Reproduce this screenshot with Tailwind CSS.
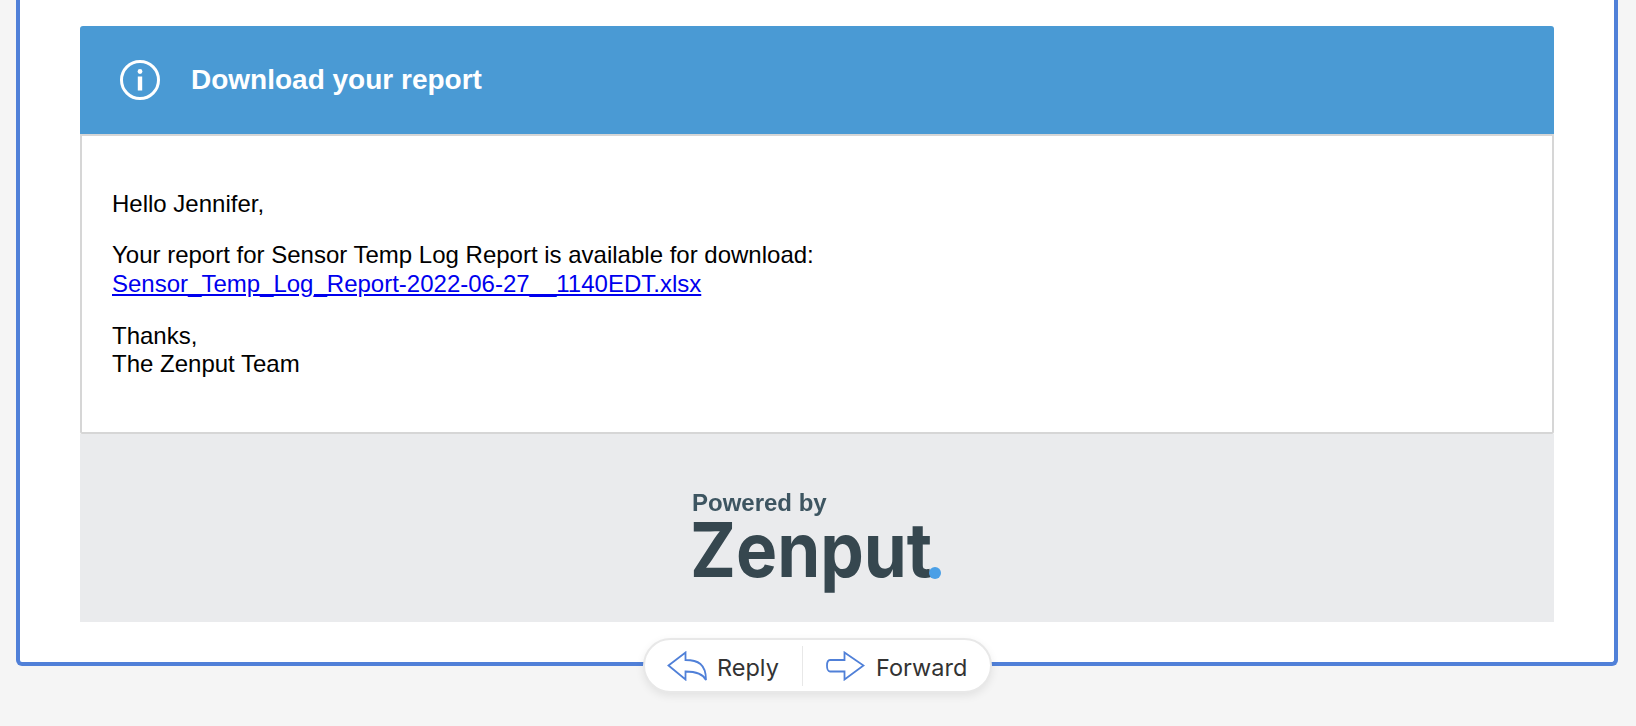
<!DOCTYPE html>
<html>
<head>
<meta charset="utf-8">
<script src="https://cdn.jsdelivr.net/npm/@tailwindcss/browser@4"></script>
</head>
<body class="bg-[#f5f5f5] overflow-hidden">
<div class="relative w-[1636px] h-[726px] pl-[16px] pr-[18px] font-['Liberation_Sans',Arial,sans-serif]">
  <div class="h-[666px] bg-white border-x-4 border-b-4 border-[#5080d8] rounded-b-[6px] pt-[26px] px-[60px]">
    <div class="h-[108px] bg-[#4a9ad4] rounded-t-[3px] flex items-center pl-[40px] gap-[31px] text-white">
      <svg width="40" height="40" viewBox="0 0 40 40" fill="none" class="shrink-0">
        <circle cx="20" cy="20" r="18.5" stroke="white" stroke-width="3"/>
        <circle cx="20" cy="11.5" r="2.4" fill="white"/>
        <rect x="17.8" y="16.5" width="4.4" height="14" fill="white"/>
      </svg>
      <span class="text-[28px] font-bold leading-none">Download your report</span>
    </div>
    <div class="h-[300px] bg-white border-x-2 border-y-2 border-[#d6d6d6] rounded-b-[2px] pl-[30px] pt-[53px] text-[24px] leading-[29px] text-black">
      <p class="mb-[22px]">Hello Jennifer,</p>
      <p class="mb-[24px]">Your report for Sensor Temp Log Report is available for download:<br><a class="text-[#0000ee] underline">Sensor_Temp_Log_Report-2022-06-27__1140EDT.xlsx</a></p>
      <p class="leading-[28px]">Thanks,<br>The Zenput Team</p>
    </div>
    <div class="h-[188px] bg-[#eaebed] flex justify-center pt-[57px]">
      <div class="relative w-[250px] h-[120px] text-[#36474f] blur-[0.5px]">
        <div class="text-[24px] font-bold leading-none text-[#3d5561]">Powered by</div>
        <div class="absolute left-[-2px] top-[20px] text-[76px] font-bold leading-none scale-x-[0.91] origin-left font-['Inter',sans-serif]">Zenput</div>
        <div class="absolute left-[237px] top-[76px] w-[12px] h-[12px] rounded-full bg-[#4a9fe6]"></div>
      </div>
    </div>
  </div>
  <div class="absolute left-[643px] top-[638px] w-[349px] h-[55px] bg-white rounded-full border-2 border-[#e8e8e8] shadow-[0_3px_8px_rgba(0,0,0,0.08)] flex items-center font-['Inter',sans-serif] text-[23.5px] text-[#333]">
    <div class="w-[157px] flex items-center pl-[22px] gap-[10px]">
      <svg width="40" height="30" viewBox="0 0 40 30" fill="none" class="shrink-0">
        <path d="M1.5 14.5 L18.5 1.5 V9 C31 9 39 13 39 29 C36 23 29 20.5 18.5 20.5 V28.5 Z" stroke="#5080d8" stroke-width="1.8" stroke-linejoin="miter"/>
      </svg>
      <span class="pt-[4px]">Reply</span>
    </div>
    <div class="w-px h-[40px] bg-[#e8e8e8]"></div>
    <div class="flex items-center pl-[22px] gap-[11px]">
      <svg width="40" height="30" viewBox="0 0 40 30" fill="none" class="shrink-0">
        <path d="M5 9 H19.5 V1.5 L38.5 14.5 L19.5 28.5 V20.5 H5 C1 20.5 1 9 5 9 Z" stroke="#5080d8" stroke-width="1.8"/>
      </svg>
      <span class="pt-[4px]">Forward</span>
    </div>
  </div>
</div>
</body>
</html>
